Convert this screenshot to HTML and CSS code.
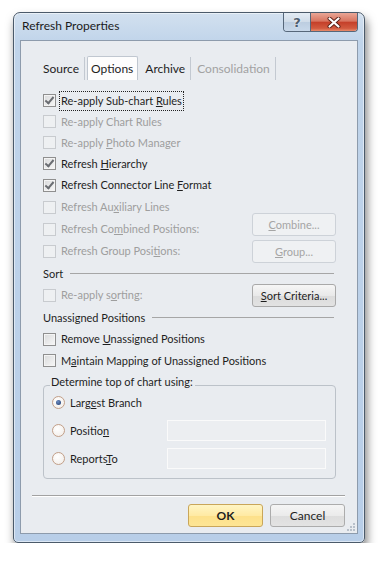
FILE: index.html
```html
<!DOCTYPE html>
<html lang="en">

<head>
    <meta charset="UTF-8">
    <meta name="viewport" content="width=device-width, initial-scale=1.0">
    <title>Refresh Properties</title>
    <link rel="stylesheet" href="styles.css">
</head>

<body>
    <div class="ventana">
        <div class="barra-titulo">
            <span class="titulo">Refresh Properties</span>
            <div class="botones-caption">
                <span class="cap ayuda">?</span>
                <span class="cap cerrar">
                    <svg width="14" height="11" viewBox="0 0 14 11">
                        <path d="M2.5 1.5 L11.5 9.5 M11.5 1.5 L2.5 9.5" stroke="#5b2016" stroke-width="4" stroke-linecap="round" />
                        <path d="M2.5 1.5 L11.5 9.5 M11.5 1.5 L2.5 9.5" stroke="#fff" stroke-width="2.2" stroke-linecap="round" />
                    </svg>
                </span>
            </div>
        </div>

        <div class="cliente">
            <div class="pestanas">
                <span class="pestana">Source</span>
                <span class="pestana activa">Options</span>
                <span class="pestana">Archive</span>
                <span class="pestana deshabilitada">Consolidation</span>
            </div>

            <div class="panel">
                <div class="fila corta">
                    <span class="chk marcado"></span>
                    <span class="etiqueta foco">Re-apply Sub-chart <u>R</u>ules</span>
                </div>
                <div class="fila corta off">
                    <span class="chk"></span>
                    <span class="etiqueta">Re-apply Chart Rules</span>
                </div>
                <div class="fila corta off">
                    <span class="chk"></span>
                    <span class="etiqueta">Re-apply <u>P</u>hoto Manager</span>
                </div>
                <div class="fila corta">
                    <span class="chk marcado"></span>
                    <span class="etiqueta">Refresh <u>H</u>ierarchy</span>
                </div>
                <div class="fila">
                    <span class="chk marcado"></span>
                    <span class="etiqueta">Refresh Connector Line <u>F</u>ormat</span>
                </div>
                <div class="fila off">
                    <span class="chk"></span>
                    <span class="etiqueta">Refresh Au<u>x</u>iliary Lines</span>
                </div>
                <div class="fila off">
                    <span class="chk"></span>
                    <span class="etiqueta">Refresh Co<u>m</u>bined Positions:</span>
                    <button class="boton boton-arriba" disabled><u>C</u>ombine...</button>
                </div>
                <div class="fila off">
                    <span class="chk"></span>
                    <span class="etiqueta">Refresh Group Posi<u>t</u>ions:</span>
                    <button class="boton" disabled><u>G</u>roup...</button>
                </div>
                <div class="fila">
                    <span class="seccion-titulo">Sort</span>
                    <span class="linea"></span>
                </div>
                <div class="fila off">
                    <span class="chk"></span>
                    <span class="etiqueta">Re-apply s<u>o</u>rting:</span>
                    <button class="boton activo"><u>S</u>ort Criteria...</button>
                </div>
                <div class="fila">
                    <span class="seccion-titulo">Unassigned Positions</span>
                    <span class="linea"></span>
                </div>
                <div class="fila">
                    <span class="chk"></span>
                    <span class="etiqueta">Remove <u>U</u>nassigned Positions</span>
                </div>
                <div class="fila corta">
                    <span class="chk"></span>
                    <span class="etiqueta">M<u>a</u>intain Mapping of Unassigned Positions</span>
                </div>

                <fieldset class="grupo">
                    <legend>Determine top of chart using:</legend>
                    <div class="fila-radio primera">
                        <span class="radio elegido"></span>
                        <span class="etiqueta-radio">Larg<u>e</u>st Branch</span>
                    </div>
                    <div class="fila-radio">
                        <span class="radio"></span>
                        <span class="etiqueta-radio">Positio<u>n</u></span>
                        <span class="caja-texto"></span>
                    </div>
                    <div class="fila-radio">
                        <span class="radio"></span>
                        <span class="etiqueta-radio">Reports<u>T</u>o</span>
                        <span class="caja-texto"></span>
                    </div>
                </fieldset>
            </div>

            <div class="pie">
                <div class="separador"></div>
                <div class="botones-pie">
                    <button class="btn-ok">OK</button>
                    <button class="btn-cancelar">Cancel</button>
                </div>
            </div>

            <svg class="agarre" width="10" height="10" viewBox="0 0 10 10">
                <rect x="7" y="1" width="2" height="2" fill="#b8c0ca" />
                <rect x="4" y="4" width="2" height="2" fill="#b8c0ca" />
                <rect x="7" y="4" width="2" height="2" fill="#b8c0ca" />
                <rect x="1" y="7" width="2" height="2" fill="#b8c0ca" />
                <rect x="4" y="7" width="2" height="2" fill="#b8c0ca" />
                <rect x="7" y="7" width="2" height="2" fill="#b8c0ca" />
            </svg>
        </div>
    </div>
</body>

</html>
```

FILE: styles.css
```css
body {
    margin: 0;
    background-color: white;
    font-family: Lato, "Open Sans", sans-serif;
    font-size: 12px;
    color: #1e1e1e;
}

.ventana {
    margin: 12px 0 0 13px;
    width: 350px;
    border: 1px solid #4b5a6a;
    border-radius: 7px 7px 5px 5px;
    background: linear-gradient(#d2e0ef, #c0d4ea 30px, #b8cee8);
    box-shadow: 2px 6px 10px rgba(0, 0, 0, 0.5), inset 0 0 0 1px rgba(255, 255, 255, 0.5);
    padding-bottom: 8px;
}

.barra-titulo {
    display: flex;
    align-items: flex-start;
    height: 27px;
}

.titulo {
    padding: 5px 0 0 8px;
    line-height: 16px;
    color: #1b1b1b;
}

.botones-caption {
    display: flex;
    margin-left: auto;
    margin-right: 6px;
    border: 1px solid #56677a;
    border-top: none;
    border-radius: 0 0 4px 4px;
    overflow: hidden;
}

.cap {
    display: flex;
    align-items: center;
    justify-content: center;
    height: 18px;
}

.ayuda {
    width: 26px;
    border-right: 1px solid #56677a;
    background: linear-gradient(#e4ecf4, #cfdbe8 50%, #bccde0 51%, #c8d8ea);
    color: #4e5d6e;
    font-family: "DejaVu Sans", sans-serif;
    font-size: 13px;
    font-weight: bold;
    text-shadow: 0 0 2px white;
}

.cerrar {
    width: 46px;
    background: linear-gradient(#e9a696, #d87560 45%, #c5402a 52%, #d25a3f 85%, #e88c6c);
}

.cliente {
    position: relative;
    margin: 0 6px 0 6px;
    border: 1px solid #8d9bac;
    background-color: #e9ecf0;
    padding-top: 15px;
}

.pestanas {
    display: flex;
    height: 24px;
    padding-left: 17px;
}

.pestana {
    display: flex;
    align-items: center;
    padding: 0 5px;
    margin: 1px 0 0 0;
    border-right: 1px solid #c3c9d1;
}

.pestana.activa {
    margin: 0 2px 0 2px;
    padding: 0 4px 0 3px;
    border: 1px solid #c0c7d0;
    border-bottom: none;
    border-radius: 2px 2px 0 0;
    background-color: #fdfdfd;
}

.pestana.deshabilitada {
    padding-left: 6px;
    color: #a2a2a2;
}

.panel {
    padding: 10px 21px 0 22px;
    font-size: 11px;
}

.fila {
    display: flex;
    align-items: center;
    height: 22px;
}

.fila.corta {
    height: 21px;
}

.fila.off .etiqueta {
    color: #9e9e9e;
}

.chk {
    width: 11px;
    height: 11px;
    border: 1px solid #8f8f8f;
    background: linear-gradient(135deg, #d9dadb, #f7f7f7);
    box-shadow: inset 0 0 0 1px #f4f4f4;
    margin-right: 4px;
    position: relative;
}

.fila.off .chk {
    border-color: #c8cbcf;
    background: #eef0f2;
    box-shadow: none;
}

.chk.marcado::after {
    content: "";
    position: absolute;
    left: 3px;
    top: 0px;
    width: 3px;
    height: 7px;
    border: solid #6a6d72;
    border-width: 0 2px 2px 0;
    transform: rotate(40deg);
}

.etiqueta {
    line-height: 16px;
    padding: 1px 1px;
}

.etiqueta.foco {
    outline: 1px dotted #222;
}

.seccion-titulo {
    margin-right: 7px;
}

.linea {
    flex: 1;
    height: 1px;
    margin-right: 2px;
    background-color: #a6a6a6;
}

.boton {
    margin-left: auto;
    width: 84px;
    height: 23px;
    border: 1px solid #cdd2d8;
    border-radius: 3px;
    background-color: #eff1f3;
    color: #a5a5a5;
    font-family: Lato, "Open Sans", sans-serif;
    font-size: 11px;
    padding: 0;
}

.boton-arriba {
    align-self: flex-start;
    margin-top: -5px;
}

.boton.activo {
    border-color: #a9a9a9;
    background: linear-gradient(#f6f6f6, #e9e9e9 50%, #dcdcdc 51%, #e2e2e2);
    color: #1e1e1e;
}

.grupo {
    margin: 3px 0 0 0;
    padding: 0 9px 6px 8px;
    border: 1px solid #bcc2c9;
    border-radius: 4px;
}

.grupo legend {
    padding: 0 2px 6px 1px;
    margin-left: -2px;
    line-height: 16px;
}

.fila-radio {
    display: flex;
    align-items: center;
    height: 28px;
}

.fila-radio.primera {
    height: 24px;
    margin-top: -6px;
    margin-bottom: 2px;
}

.radio {
    width: 11px;
    height: 11px;
    border: 1px solid #c29f88;
    border-radius: 50%;
    background: radial-gradient(circle at 40% 35%, #ffffff, #f0ebe6);
    margin-right: 5px;
    position: relative;
}

.radio.elegido::after {
    content: "";
    position: absolute;
    left: 3px;
    top: 3px;
    width: 5px;
    height: 5px;
    border-radius: 50%;
    background: radial-gradient(circle at 40% 35%, #6d8ec4, #1d3566);
}

.etiqueta-radio {
    width: 97px;
}

.caja-texto {
    width: 157px;
    height: 19px;
    border: 1px solid #fafafa;
    background-color: #eceef1;
}

.pie {
    padding: 16px 12px 6px 11px;
}

.separador {
    height: 1px;
    background-color: #a2a2a2;
    box-shadow: 0 1px 0 #ffffff;
}

.botones-pie {
    display: flex;
    justify-content: flex-end;
    gap: 7px;
    margin-top: 8px;
}

.btn-ok,
.btn-cancelar {
    width: 75px;
    height: 23px;
    border-radius: 3px;
    font-family: Lato, "Open Sans", sans-serif;
    font-size: 12px;
    color: #1e1e1e;
    padding: 0;
}

.btn-ok {
    border: 1px solid #c9a65a;
    background: linear-gradient(#fff5c4, #ffeaa4 50%, #fde08a 51%, #fde595);
    font-weight: bold;
}

.btn-cancelar {
    border: 1px solid #acacac;
    background: linear-gradient(#f5f5f5, #ebebeb 50%, #dddddd 51%, #e3e3e3);
}

.agarre {
    position: absolute;
    right: 1px;
    bottom: 1px;
}
```
